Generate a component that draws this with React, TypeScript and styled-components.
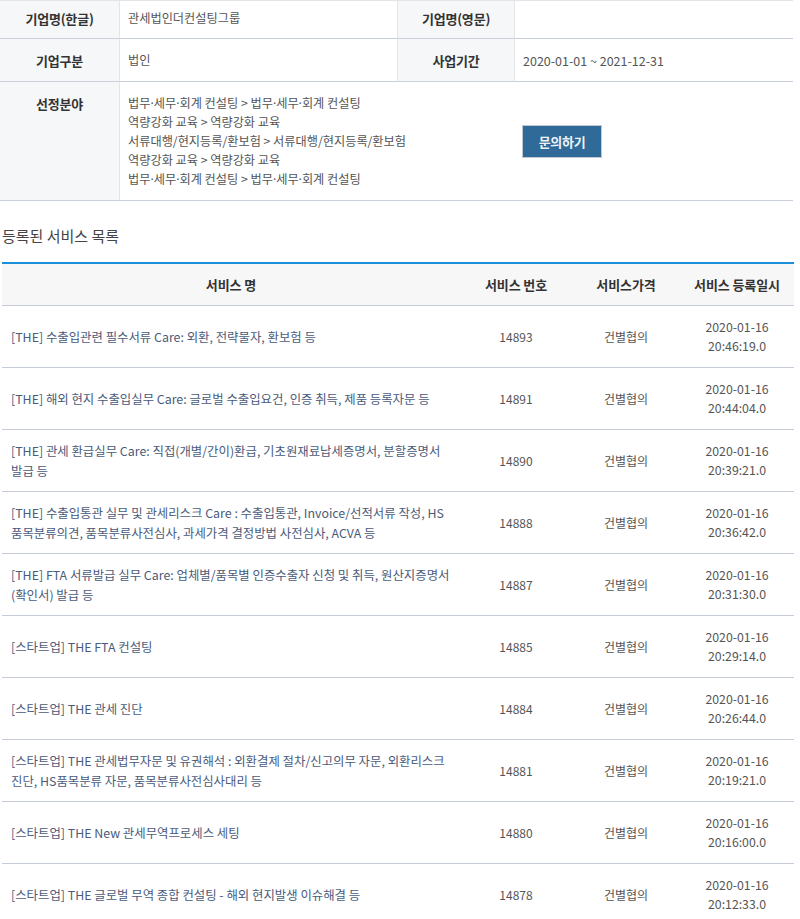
import React from "react";
import styled, { createGlobalStyle } from "styled-components";

const GlobalStyle = createGlobalStyle`
  html, body { margin: 0; padding: 0; background: #ffffff; }
  body { font-family: "Noto Sans CJK KR", "Noto Sans", sans-serif; color: #555; }
  * { box-sizing: border-box; }
`;

const Page = styled.div`
  width: 800px;
  display: flex;
  flex-direction: column;
`;

const InfoGrid = styled.div`
  width: 793px;
  display: grid;
  grid-template-columns: 120px 277px 118px 278px;
  border-top: 1px solid #e3e4e7;
`;

const Label = styled.div<{ $top?: boolean; $left?: boolean; $tall?: number; $lift?: boolean }>`
  background: #f6f7f9;
  border-bottom: 1px solid #c9cfdb;
  border-right: 1px solid #e2e4e8;
  ${(p) => (p.$left ? "border-left: 1px solid #e2e4e8;" : "")}
  display: flex;
  justify-content: center;
  align-items: ${(p) => (p.$top ? "flex-start" : "center")};
  padding-top: ${(p) => (p.$top ? "12px" : "0")};
  padding-bottom: ${(p) => (p.$lift ? "3px" : "0")};
  min-height: ${(p) => p.$tall ?? 43}px;
  font-size: 13px;
  font-weight: 700;
  color: #333;
  letter-spacing: -0.2px;
`;

const Value = styled.div<{ $tall?: number; $numeric?: boolean; $lift?: boolean }>`
  border-bottom: 1px solid #c9cfdb;
  display: flex;
  align-items: center;
  padding: 0 8px ${(p) => (p.$lift ? "3px" : "0")} 8px;
  min-height: ${(p) => p.$tall ?? 43}px;
  font-size: ${(p) => (p.$numeric ? "12.5px" : "12.2px")};
  color: #555;
`;

const FieldList = styled.div`
  grid-column: span 2;
  border-bottom: 1px solid #c9cfdb;
  padding: 12px 8px 11px 8px;
  display: flex;
  flex-direction: column;
  font-size: 12.2px;
  line-height: 19px;
  color: #555;
`;

const Dot = styled.span`
  font-family: "Noto Sans", sans-serif;
`;

const ButtonCell = styled.div`
  border-bottom: 1px solid #c9cfdb;
  display: flex;
  align-items: center;
  padding: 0 7px;
`;

const InquiryButton = styled.button`
  width: 80px;
  height: 33px;
  background: #2f6a98;
  border: 1px solid #c3c8d0;
  color: #eef2f7;
  font-family: "Noto Sans CJK KR", "Noto Sans", sans-serif;
  font-size: 13px;
  font-weight: 700;
  letter-spacing: -0.3px;
  padding: 0;
  cursor: pointer;
`;

const Section = styled.section`
  margin-left: 2px;
  width: 792px;
  display: flex;
  flex-direction: column;
`;

const Heading = styled.h3`
  margin: 25px 0 16px 0;
  font-size: 15px;
  font-weight: 400;
  color: #444;
  line-height: 20px;
`;

const ServiceGrid = styled.div`
  display: grid;
  grid-template-columns: 458px 112px 108px 114px;
  border-top: 2px solid #1b8fd8;
`;

const HeadCell = styled.div`
  background: #f7f7f7;
  border-bottom: 1px solid #c5ccd8;
  height: 42px;
  display: flex;
  align-items: center;
  justify-content: center;
  font-size: 13px;
  font-weight: 700;
  color: #333;
  letter-spacing: -0.1px;
`;

const Cell = styled.div<{ $align?: "left" | "center" }>`
  border-bottom: 1px solid #c5ccd8;
  height: 62px;
  display: flex;
  flex-direction: column;
  justify-content: center;
  align-items: ${(p) => (p.$align === "left" ? "flex-start" : "center")};
  padding: ${(p) => (p.$align === "left" ? "0 9px" : "0")};
  font-size: 12px;
  line-height: 20px;
  color: #555;
  text-align: ${(p) => p.$align ?? "center"};
`;

const TitleLink = styled.a`
  color: #4a5b7b;
  text-decoration: none;
  font-size: 12.4px;
`;

const DateText = styled.span`
  line-height: 19px;
  font-size: 12.3px;
`;

const fields = [
  "법무·세무·회계 컨설팅 > 법무·세무·회계 컨설팅",
  "역량강화 교육 > 역량강화 교육",
  "서류대행/현지등록/환보험 > 서류대행/현지등록/환보험",
  "역량강화 교육 > 역량강화 교육",
  "법무·세무·회계 컨설팅 > 법무·세무·회계 컨설팅",
];

const renderField = (text: string) =>
  text.split("·").map((part, i) => (
    <React.Fragment key={i}>
      {i > 0 && <Dot>·</Dot>}
      {part}
    </React.Fragment>
  ));

type Service = { title: string[]; no: string; time: string };

const services: Service[] = [
  { title: ["[THE] 수출입관련 필수서류 Care: 외환, 전략물자, 환보험 등"], no: "14893", time: "20:46:19.0" },
  { title: ["[THE] 해외 현지 수출입실무 Care: 글로벌 수출입요건, 인증 취득, 제품 등록자문 등"], no: "14891", time: "20:44:04.0" },
  { title: ["[THE] 관세 환급실무 Care: 직접(개별/간이)환급, 기초원재료납세증명서, 분할증명서", "발급 등"], no: "14890", time: "20:39:21.0" },
  { title: ["[THE] 수출입통관 실무 및 관세리스크 Care : 수출입통관, Invoice/선적서류 작성, HS", "품목분류의견, 품목분류사전심사, 과세가격 결정방법 사전심사, ACVA 등"], no: "14888", time: "20:36:42.0" },
  { title: ["[THE] FTA 서류발급 실무 Care: 업체별/품목별 인증수출자 신청 및 취득, 원산지증명서", "(확인서) 발급 등"], no: "14887", time: "20:31:30.0" },
  { title: ["[스타트업] THE FTA 컨설팅"], no: "14885", time: "20:29:14.0" },
  { title: ["[스타트업] THE 관세 진단"], no: "14884", time: "20:26:44.0" },
  { title: ["[스타트업] THE 관세법무자문 및 유권해석 : 외환결제 절차/신고의무 자문, 외환리스크", "진단, HS품목분류 자문, 품목분류사전심사대리 등"], no: "14881", time: "20:19:21.0" },
  { title: ["[스타트업] THE New 관세무역프로세스 세팅"], no: "14880", time: "20:16:00.0" },
  { title: ["[스타트업] THE 글로벌 무역 종합 컨설팅 - 해외 현지발생 이슈해결 등"], no: "14878", time: "20:12:33.0" },
];

export default function App() {
  return (
    <Page>
      <GlobalStyle />
      <InfoGrid>
        <Label $tall={38} $lift>기업명(한글)</Label>
        <Value $tall={38} $lift>관세법인더컨설팅그룹</Value>
        <Label $tall={38} $lift $left>기업명(영문)</Label>
        <Value $tall={38} $lift></Value>

        <Label>기업구분</Label>
        <Value>법인</Value>
        <Label $left>사업기간</Label>
        <Value $numeric>2020-01-01 ~ 2021-12-31</Value>

        <Label $top $tall={119}>선정분야</Label>
        <FieldList>
          {fields.map((f, i) => (
            <span key={i}>{renderField(f)}</span>
          ))}
        </FieldList>
        <ButtonCell>
          <InquiryButton type="button">문의하기</InquiryButton>
        </ButtonCell>
      </InfoGrid>

      <Section>
        <Heading>등록된 서비스 목록</Heading>
        <ServiceGrid>
          <HeadCell>서비스 명</HeadCell>
          <HeadCell>서비스 번호</HeadCell>
          <HeadCell>서비스가격</HeadCell>
          <HeadCell>서비스 등록일시</HeadCell>
          {services.map((s) => (
            <React.Fragment key={s.no}>
              <Cell $align="left">
                <TitleLink href="#">
                  {s.title.map((line, i) => (
                    <React.Fragment key={i}>
                      {i > 0 && <br />}
                      {line}
                    </React.Fragment>
                  ))}
                </TitleLink>
              </Cell>
              <Cell>{s.no}</Cell>
              <Cell>건별협의</Cell>
              <Cell>
                <DateText>2020-01-16</DateText>
                <DateText>{s.time}</DateText>
              </Cell>
            </React.Fragment>
          ))}
        </ServiceGrid>
      </Section>
    </Page>
  );
}
